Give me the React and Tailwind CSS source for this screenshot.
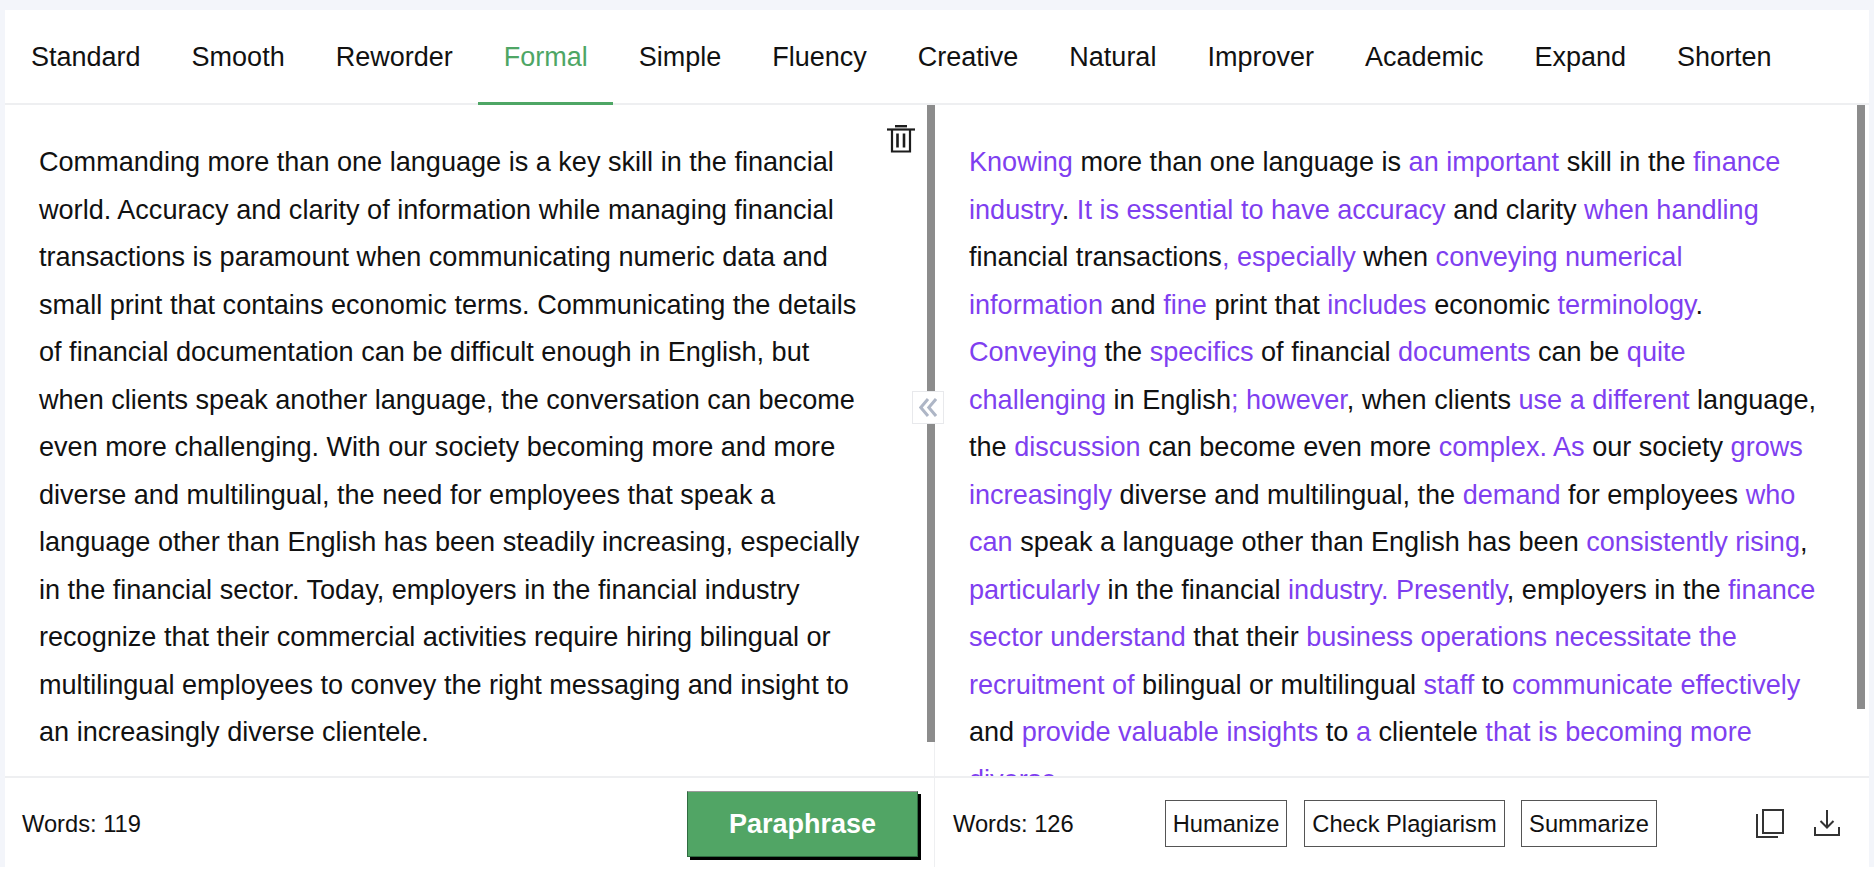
const tabs = ["Standard","Smooth","Reworder","Formal","Simple","Fluency","Creative","Natural","Improver","Academic","Expand","Shorten"];
const left = "Commanding more than one language is a key skill in the financial world. Accuracy and clarity of information while managing financial transactions is paramount when communicating numeric data and small print that contains economic terms. Communicating the details of financial documentation can be difficult enough in English, but when clients speak another language, the conversation can become even more challenging. With our society becoming more and more diverse and multilingual, the need for employees that speak a language other than English has been steadily increasing, especially in the financial sector. Today, employers in the financial industry recognize that their commercial activities require hiring bilingual or multilingual employees to convey the right messaging and insight to an increasingly diverse clientele.";
const right = [
 ["Knowing",1]," more than one language is ",["an important",1]," skill in the ",["finance industry",1],". ",["It is essential to have accuracy",1]," and clarity ",["when handling",1]," financial transactions",[", especially",1]," when ",["conveying numerical information",1]," and ",["fine",1]," print that ",["includes",1]," economic ",["terminology",1],". ",["Conveying",1]," the ",["specifics",1]," of financial ",["documents",1]," can be ",["quite challenging",1]," in English",["; however",1],", when clients ",["use a different",1]," language, the ",["discussion",1]," can become even more ",["complex. As",1]," our society ",["grows increasingly",1]," diverse and multilingual, the ",["demand",1]," for employees ",["who can",1]," speak a language other than English has been ",["consistently rising",1],", ",["particularly",1]," in the financial ",["industry. Presently",1],", employers in the ",["finance sector understand",1]," that their ",["business operations necessitate the recruitment of",1]," bilingual or multilingual ",["staff",1]," to ",["communicate effectively",1]," and ",["provide valuable insights",1]," to ",["a",1]," clientele ",["that is becoming more diverse.",1]
];

function Trash() {
  return (
    <svg width="28" height="28" viewBox="0 0 28 28" fill="none" stroke="#1c1c1c" strokeWidth="2.2">
      <path d="M0 4.5h28" />
      <path d="M8 1.2h12" strokeWidth="2.4" />
      <path d="M5 4.5v22h18v-22" />
      <path d="M10.5 8.5v14M17 8.5v14" strokeWidth="2.6" />
    </svg>
  );
}
function Copy() {
  return (
    <svg width="28" height="29" viewBox="0 0 28 29" fill="none" stroke="#333" strokeWidth="2">
      <rect x="7" y="1" width="20" height="23" />
      <path d="M1 5v23h21" />
    </svg>
  );
}
function Download() {
  return (
    <svg width="26" height="26" viewBox="0 0 26 26" fill="none" stroke="#333" strokeWidth="2">
      <path d="M13 0v17" />
      <path d="M6.5 11l6.5 6.5 6.5-6.5" />
      <path d="M1 17v8h24v-8" />
    </svg>
  );
}

export default function App() {
  return (
    <div className="bg-white h-[880px] overflow-hidden text-[#111]" style={{ fontFamily: '"Liberation Sans", Arial, sans-serif' }}>
      <div className="bg-[#f3f5fa] h-[867px] pt-[10px] pl-[5px] pr-[5px]">
        <div className="bg-white h-[857px] flex flex-col">
          <div className="flex h-[95px] border-b-2 border-[#eeeff1] shrink-0 pl-[0.5px]">
            {tabs.map((t) => (
              <div key={t} className={`px-[25.5px] h-[95px] flex items-center pb-[1px] text-[27px] whitespace-nowrap ${t === "Formal" ? "text-[#4ea665] shadow-[inset_0_-3px_0_#4ea665]" : ""}`}>{t}</div>
            ))}
          </div>
          <div className="flex flex-1 min-h-0">
            <div className="w-[930px] flex flex-col border-r border-[#eeeff1] shrink-0">
              <div className="relative h-[671px] pl-[34px] pr-[64px] pt-[33px] text-[27.08px] leading-[47.5px]">
                <div className="absolute right-[19px] top-[20px]"><Trash /></div>
                <div className="absolute right-[-1px] top-0 w-[8px] h-[637px] bg-[#8c8c8c]" />
                <p>{left}</p>
              </div>
              <div className="h-[91px] border-t-2 border-[#eeeff1] flex items-center justify-between pl-[17px] pr-[16px] text-[23.7px]">
                <span className="mt-[5px]">Words: 119</span>
                <button className="w-[231px] h-[66px] mt-[3px] pt-[1px] bg-[#51a565] text-white font-bold text-[27px] border border-[#2f6b40] border-t-[#9a9a9a] shadow-[3px_3px_0_#000]">Paraphrase</button>
              </div>
            </div>
            <div className="flex-1 flex flex-col min-w-0">
              <div className="relative h-[671px] overflow-hidden pl-[34px] pr-[50px] pt-[33px] text-[27.08px] leading-[47.5px]">
                <div className="absolute right-[4px] top-0 w-[8px] h-[604px] bg-[#8c8c8c]" />
                <p>
                  {right.map((r, i) => typeof r === "string" ? <span key={i}>{r}</span> : <span key={i} className="text-[#7f3ff0]">{r[0]}</span>)}
                </p>
              </div>
              <div className="h-[91px] border-t-2 border-[#eeeff1] flex items-center pl-[18px] text-[23.7px]">
                <span className="w-[212px] mt-[5px]">Words: 126</span>
                <div className="flex mt-[1px]">
                  <button className="w-[122px] h-[47px] pt-[3px] border border-[#555]">Humanize</button>
                  <button className="w-[201px] h-[47px] pt-[3px] border border-[#555] ml-[17px]">Check Plagiarism</button>
                  <button className="w-[136px] h-[47px] pt-[3px] border border-[#555] ml-[16px]">Summarize</button>
                </div>
                <div className="flex items-center gap-[30px] ml-[99px] mt-[1px]">
                  <Copy />
                  <Download />
                </div>
              </div>
            </div>
          </div>
        </div>
      </div>
      <div className="fixed left-[912px] top-[391px] w-[32px] h-[33px] bg-white border border-[#e8e9ec] flex items-center justify-center">
        <svg width="18" height="19" viewBox="0 0 18 19" fill="none" stroke="#aeb6c6" strokeWidth="3">
          <path d="M9 1L1.8 9.5 9 18M17 1L9.8 9.5 17 18" />
        </svg>
      </div>
    </div>
  );
}
